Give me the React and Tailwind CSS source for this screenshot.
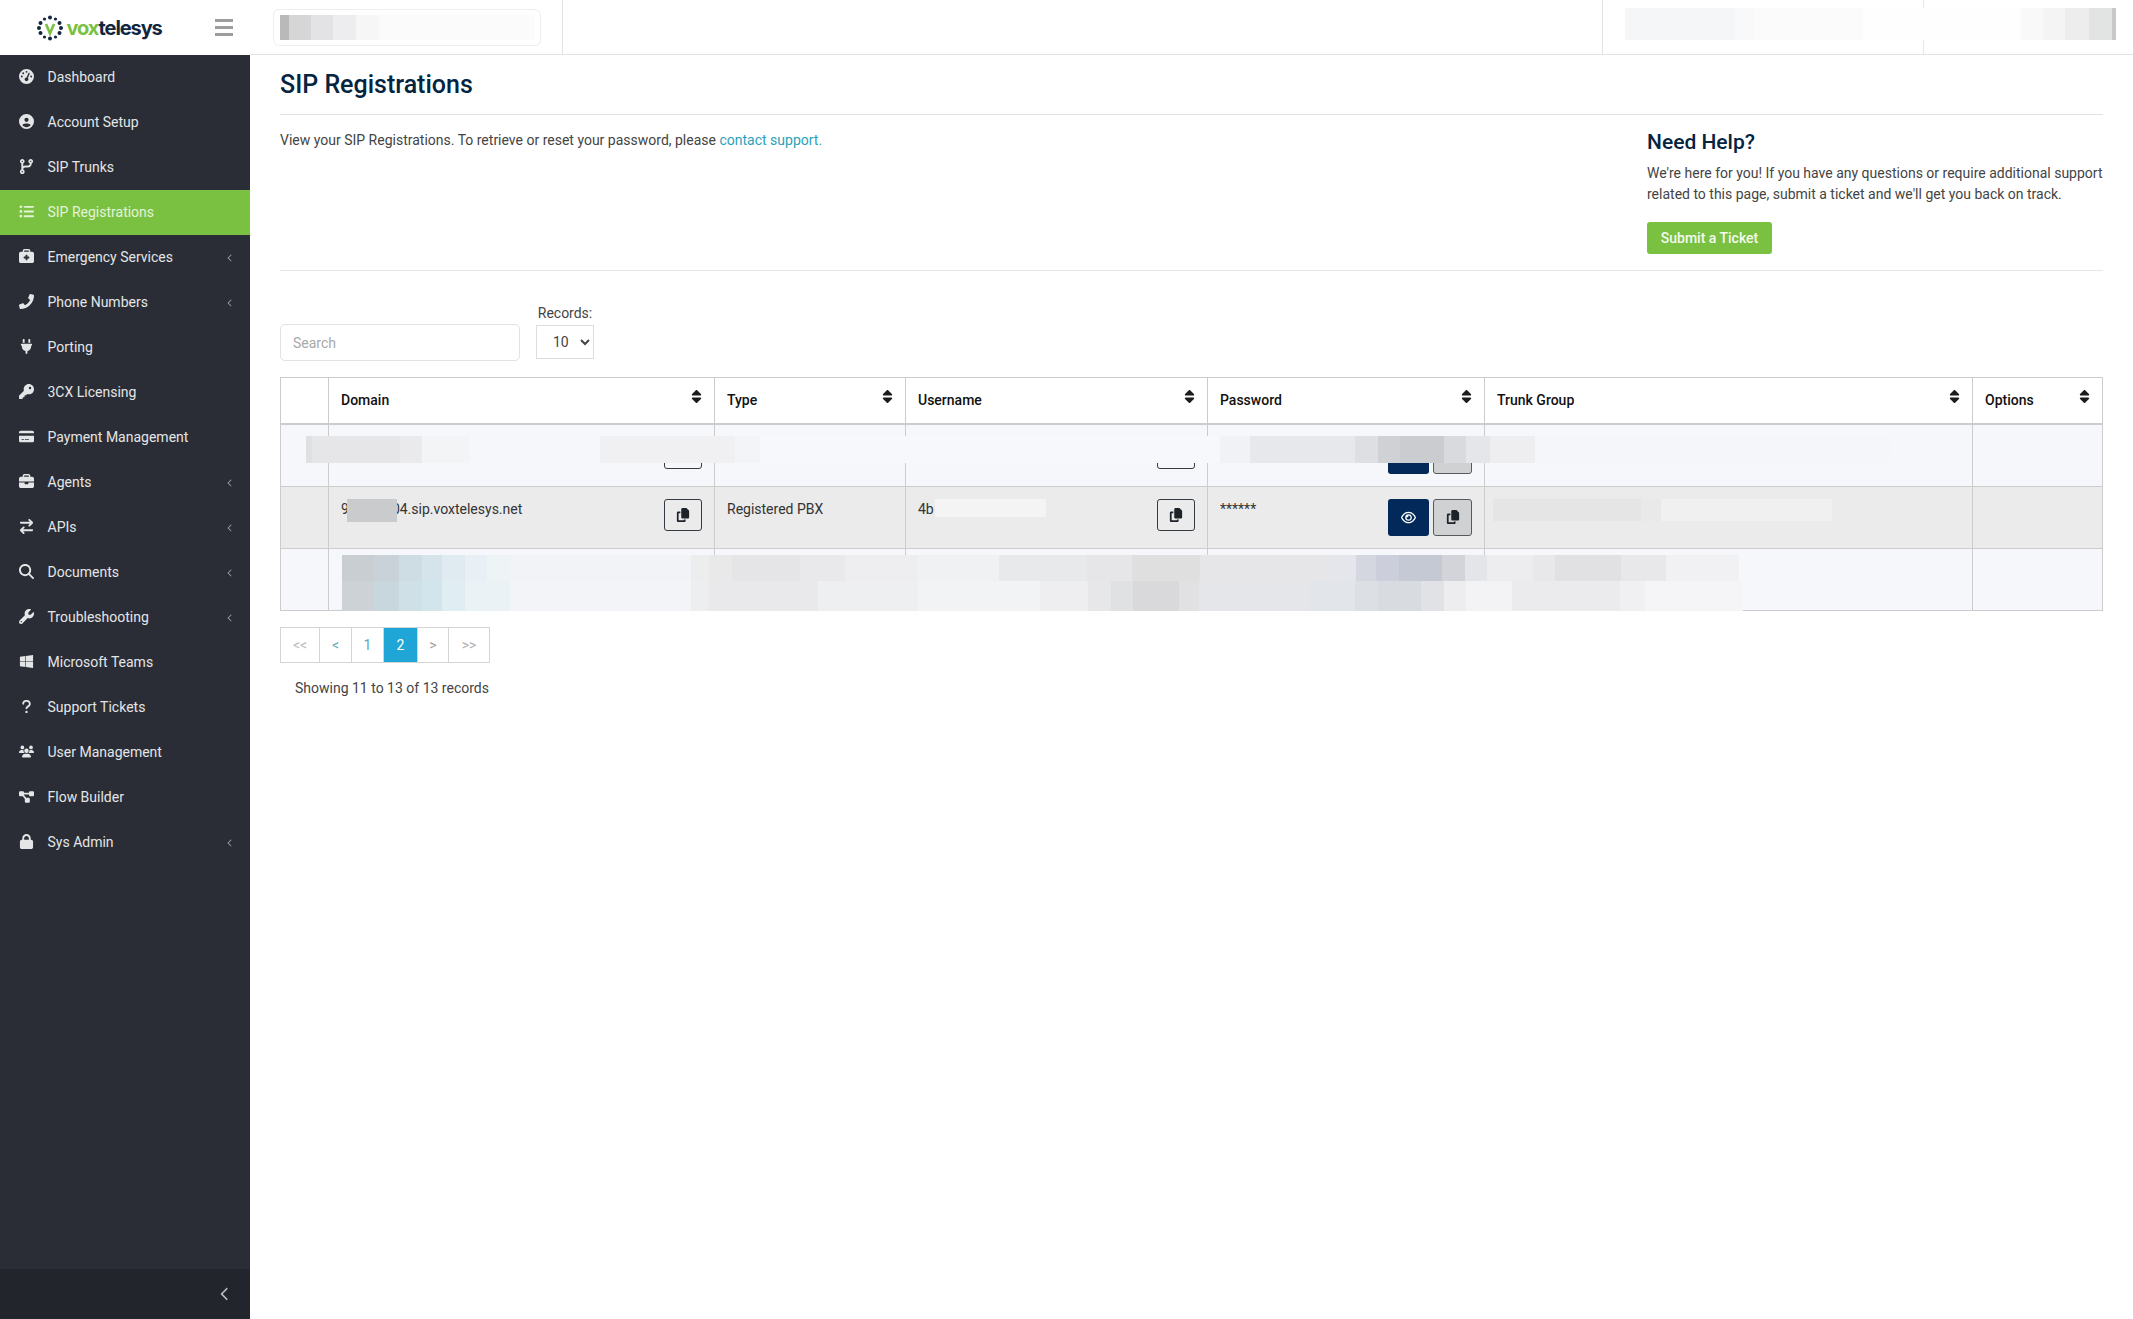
import React from 'react';
import { FaPhone } from 'react-icons/fa';
import {
  FaGaugeHigh, FaCircleUser, FaCodeBranch, FaListUl, FaBriefcaseMedical, FaPlug, FaKey,
  FaCreditCard, FaBriefcase, FaArrowRightArrowLeft, FaMagnifyingGlass, FaWrench, FaWindows, FaQuestion, FaUsers,
  FaDiagramProject, FaLock, FaChevronLeft, FaSort, FaCopy, FaRegEye,
} from 'react-icons/fa6';

const navItems = [
  { label: 'Dashboard', icon: FaGaugeHigh },
  { label: 'Account Setup', icon: FaCircleUser },
  { label: 'SIP Trunks', icon: FaCodeBranch },
  { label: 'SIP Registrations', icon: FaListUl, active: true },
  { label: 'Emergency Services', icon: FaBriefcaseMedical, sub: true },
  { label: 'Phone Numbers', icon: FaPhone, sub: true },
  { label: 'Porting', icon: FaPlug },
  { label: '3CX Licensing', icon: FaKey },
  { label: 'Payment Management', icon: FaCreditCard },
  { label: 'Agents', icon: FaBriefcase, sub: true },
  { label: 'APIs', icon: FaArrowRightArrowLeft, sub: true },
  { label: 'Documents', icon: FaMagnifyingGlass, sub: true },
  { label: 'Troubleshooting', icon: FaWrench, sub: true },
  { label: 'Microsoft Teams', icon: FaWindows },
  { label: 'Support Tickets', icon: FaQuestion },
  { label: 'User Management', icon: FaUsers, size: 17 },
  { label: 'Flow Builder', icon: FaDiagramProject, size: 16 },
  { label: 'Sys Admin', icon: FaLock, sub: true },
];

// [width, colour] runs for the pixelated areas that hide private values
const mosaics = {
  searchBox: [[9, '#b9b9ba'], [22, '#d6d6d7'], [22, '#e3e3e5'], [23, '#ededef'], [23, '#f6f6f7'], [156, '#fbfbfb']],
  headerRight: [[110, '#f5f6f7'], [20, '#f9f9fa'], [108, '#fbfbfc'], [158, '#fefefe'], [22, '#f9f9f9'], [22, '#f4f4f4'], [24, '#ededed'], [23, '#e2e3e3'], [4, '#c8c8c8']],
  rowOne: [[6, '#dfe0e2'], [88, '#e6e6e8'], [22, '#eaeaec'], [48, '#f3f4f6'], [130, '#f6f7fa'], [135, '#f0f0f3'], [25, '#f3f4f7'], [460, '#f7f8fb'], [30, '#f1f2f5'], [105, '#e7e8eb'], [23, '#dddfe2'], [22, '#cfd1d4'], [44, '#cacccf'], [22, '#d8dadd'], [24, '#e5e6e9'], [45, '#eeeef1'], [355, '#f5f6f9']],
  rowThreeTop: [[32, '#c9ced2'], [25, '#c8d2d8'], [23, '#cddde3'], [20, '#d5e3ea'], [23, '#e0ebf1'], [22, '#e9f0f5'], [23, '#eef3f6'], [181, '#f1f3f6'], [18, '#eceded'], [23, '#e9e9ea'], [68, '#e5e5e7'], [45, '#e9e9eb'], [73, '#eeeef0'], [81, '#f0f1f3'], [88, '#e8e9eb'], [45, '#e6e6e8'], [68, '#dfdfe0'], [129, '#e6e6e9'], [27, '#e5e6ec'], [20, '#d4d6e0'], [23, '#cccfdb'], [43, '#c5c9d4'], [23, '#d2d4da'], [22, '#e4e5e8'], [46, '#ededef'], [22, '#e8e8ea'], [66, '#e1e1e3'], [45, '#e8e8ea'], [73, '#f1f1f3']],
  rowThreeBottom: [[32, '#cdd2d6'], [25, '#c8d7de'], [23, '#cfe0e7'], [20, '#d3e5ec'], [23, '#e0edf3'], [45, '#ebf2f6'], [181, '#f3f4f7'], [18, '#edeeef'], [109, '#e9e9eb'], [100, '#eeeff1'], [122, '#f2f3f5'], [48, '#eeeef0'], [23, '#e7e7e9'], [22, '#e0e1e2'], [46, '#d9d9db'], [20, '#e1e1e3'], [109, '#e5e6e9'], [47, '#e2e5e9'], [23, '#dcdfe3'], [43, '#d8dbdf'], [23, '#e0e2e5'], [22, '#ededef'], [46, '#f3f3f5'], [108, '#ebebed'], [25, '#f0f0f2'], [98, '#f5f5f7']],
  trunkGroup: [[148, '#e5e5e6'], [20, '#e9e9ea'], [171, '#f0f0f0']],
};

function Mosaic({ runs, className = 'h-full' }) {
  return (
    <div className={`flex ${className}`}>
      {runs.map(([width, color], i) => (
        <div key={i} style={{ width, backgroundColor: color }} />
      ))}
    </div>
  );
}

function Logo() {
  const dots = [
    [50, 16.5, 2], [44.5, 18, 1.6], [55.5, 18, 1.6], [40.5, 22, 2], [59.5, 22, 2], [39, 27, 2],
    [61, 27, 2], [40.5, 32, 2], [59.5, 32, 2], [44.5, 36, 1.6], [55.5, 36, 1.6], [50, 37.5, 2],
  ];
  return (
    <div className="flex items-center">
      <svg width="28" height="28" viewBox="36 13 28 28" className="shrink-0">
        {dots.map(([cx, cy, r]) => <circle key={`${cx}-${cy}`} cx={cx} cy={cy} r={r} fill="#12263f" />)}
        <path d="M46 23 L50 32.5 L54 23" fill="none" stroke="#7ac142" strokeWidth="2.6" />
      </svg>
      <span className="ml-[2.5px] font-['Inter',sans-serif] text-[20px] leading-none font-bold tracking-[-1.1px]">
        <span className="text-[#7ac142]">vox</span>
        <span className="text-[#12263f]">telesys</span>
      </span>
    </div>
  );
}

function Sidebar() {
  return (
    <aside className="flex w-[250px] shrink-0 flex-col bg-[#2a2d35]">
      <div className="flex h-[55px] items-center justify-between bg-white pr-[17px] pl-[36px]">
        <Logo />
        <div className="flex w-[18px] flex-col gap-[4.5px]">
          <div className="h-[2.5px] bg-[#9d9d9d]" />
          <div className="h-[2.5px] bg-[#9d9d9d]" />
          <div className="h-[2.5px] bg-[#9d9d9d]" />
        </div>
      </div>
      <nav className="flex-1">
        {navItems.map((item) => (
          <div
            key={item.label}
            className={`flex h-[45px] items-center pr-4 pb-[2px] pl-[19px] text-sm ${item.active ? 'bg-[#7ac142] text-[#e4f3d7]' : 'text-[#e4e5e7]'}`}
          >
            <span className="flex w-[28.5px] shrink-0 items-center">
              <span className="flex w-[15px] justify-center">
                <item.icon size={item.size || 15} />
              </span>
            </span>
            <span className="flex-1">{item.label}</span>
            {item.sub && <FaChevronLeft size={8} className="mt-[3px] text-[#9a9ca1]" />}
          </div>
        ))}
      </nav>
      <div className="flex h-[50px] items-center justify-end bg-[#23252c] pr-[18px]">
        <FaChevronLeft size={14} className="text-[#b9bbc0]" />
      </div>
    </aside>
  );
}

function TopBar() {
  return (
    <header className="flex h-[55px] border-b border-[#e2e2e2] bg-white">
      <div className="flex w-[313px] shrink-0 items-center border-r border-[#e2e2e2] pl-[23px]">
        <div className="h-[37px] w-[268px] overflow-hidden rounded-md border border-[#eeeeee] py-[5px] pl-[6px]">
          <Mosaic runs={mosaics.searchBox} />
        </div>
      </div>
      <div className="flex-1" />
      <div className="relative w-[531px] shrink-0 border-l border-[#e2e2e2]">
        <div className="ml-[320px] h-full w-[211px] border-l border-[#e8e8e8]" />
        <div className="absolute top-2 left-[22px] h-8">
          <Mosaic runs={mosaics.headerRight} />
        </div>
      </div>
    </header>
  );
}

function CopyButton({ className = 'h-8 w-[38px] border-[#333a42]' }) {
  return (
    <button className={`flex shrink-0 items-center justify-center rounded-[3px] border text-[#1d2329] ${className}`}>
      <FaCopy size={14} />
    </button>
  );
}

function PasswordButtons() {
  return (
    <div className="flex shrink-0 gap-1">
      <button className="flex h-[37px] w-[41px] items-center justify-center rounded-[3px] bg-[#03295a] text-white">
        <FaRegEye size={15} />
      </button>
      <CopyButton className="h-[37px] w-[39px] border-[#555a60] bg-[#d0d1d3]" />
    </div>
  );
}

const columns = [
  { label: '', width: 'w-[48px]' },
  { label: 'Domain', width: 'w-[386px]' },
  { label: 'Type', width: 'w-[191px]' },
  { label: 'Username', width: 'w-[302px]' },
  { label: 'Password', width: 'w-[277px]' },
  { label: 'Trunk Group', width: 'w-[488px]' },
  { label: 'Options', width: 'w-[130px]' },
];

function RegistrationsTable() {
  const cell = 'border border-[#cccccc] px-3 py-3 align-top';
  return (
    <div className="relative mt-4">
      <table className="w-[1822px] table-fixed border-collapse text-sm text-[#333]">
        <colgroup>
          {columns.map((c) => <col key={c.label} className={c.width} />)}
        </colgroup>
        <thead>
          <tr className="h-[46px]">
            {columns.map((c) => (
              <th key={c.label} className="border border-b-2 border-[#cccccc] px-3 align-middle font-medium text-[#111]">
                {c.label && (
                  <div className="flex items-center justify-between text-left">
                    <span className="-mt-[1px] pr-[1px]">{c.label}</span>
                    <FaSort size={15} className="-mt-[7px] -mr-[2px] text-[#1c1c1c]" />
                  </div>
                )}
              </th>
            ))}
          </tr>
        </thead>
        <tbody>
          <tr className="h-[62px] bg-[#f5f7fa]">
            <td className={cell} />
            <td className={cell}><div className="flex justify-end"><CopyButton /></div></td>
            <td className={cell} />
            <td className={cell}><div className="flex justify-end"><CopyButton /></div></td>
            <td className={cell}><div className="flex justify-end"><PasswordButtons /></div></td>
            <td className={cell} />
            <td className={cell} />
          </tr>
          <tr className="h-[62px] bg-[#ebebeb]">
            <td className={cell} />
            <td className={cell}>
              <div className="flex items-start justify-between">
                <span className="relative whitespace-nowrap">
                  9
                  <span className="relative z-10 -ml-[2px] inline-block h-[23px] w-[50px] bg-[#c9cbcd] align-top" />
                  <span className="-ml-[5px]">04.sip.voxtelesys.net</span>
                </span>
                <CopyButton />
              </div>
            </td>
            <td className={cell}>Registered PBX</td>
            <td className={cell}>
              <div className="flex items-start justify-between">
                <span className="flex items-start">
                  4b
                  <span className="ml-[1px] inline-block h-[18px] w-[111px] bg-[#f4f4f4]" />
                </span>
                <CopyButton />
              </div>
            </td>
            <td className={cell}>
              <div className="flex items-start justify-between">
                <span>******</span>
                <PasswordButtons />
              </div>
            </td>
            <td className="border border-[#cccccc] py-3 pr-3 pl-2 align-top">
              <Mosaic runs={mosaics.trunkGroup} className="h-[22px]" />
            </td>
            <td className={cell} />
          </tr>
          <tr className="h-[62px] bg-[#f5f7fa]">
            <td className={cell} />
            <td className={cell} />
            <td className={cell} />
            <td className={cell} />
            <td className={cell} />
            <td className={cell} />
            <td className={cell} />
          </tr>
        </tbody>
      </table>
      {/* masked values lying over the first and last rows */}
      <div className="absolute top-[59px] left-[26px] h-[27px]">
        <Mosaic runs={mosaics.rowOne} />
      </div>
      <div className="absolute top-[178px] left-[62px]">
        <Mosaic runs={mosaics.rowThreeTop} className="h-[26px]" />
        <Mosaic runs={mosaics.rowThreeBottom} className="h-[30px]" />
      </div>
    </div>
  );
}

function Pagination() {
  const pages = [
    { label: '<<', cls: 'w-10 text-[#b8b8b8]' },
    { label: '<', cls: 'w-[33px] text-[#5fa8b8]' },
    { label: '1', cls: 'w-[33px] text-[#5fa8b8]' },
    { label: '2', cls: 'w-[35px] bg-[#1fa5d6] text-white border-[#1fa5d6]' },
    { label: '>', cls: 'w-[32px] text-[#a0a0a0]' },
    { label: '>>', cls: 'w-[42px] text-[#b0b0b0]' },
  ];
  return (
    <div className="mt-4 flex h-9">
      {pages.map((p) => (
        <button key={p.label} className={`-ml-px flex items-center justify-center border border-[#d5d5d5] text-sm first:ml-0 ${p.cls}`}>
          {p.label}
        </button>
      ))}
    </div>
  );
}

export default function App() {
  return (
    <div className="flex min-h-screen w-full bg-white font-['Roboto',sans-serif] text-sm text-[#333]">
      <Sidebar />
      <div className="min-w-0 flex-1">
        <TopBar />
        <main className="px-[30px]">
          <h1 className="flex h-[60px] items-center border-b border-[#e2e2e2] text-[25px] font-medium text-[#04243f]">
            SIP Registrations
          </h1>
          <section className="flex h-[156px] justify-between border-b border-[#e8e8e8]">
            <p className="pt-[15px] leading-[21px] text-[#444]">
              View your SIP Registrations. To retrieve or reset your password, please{' '}
              <a className="text-[#2ba2bb]">contact support.</a>
            </p>
            <div className="w-[456px] pt-[14px]">
              <h2 className="text-[21px] leading-[26px] font-medium text-[#04243f]">Need Help?</h2>
              <p className="mt-[8px] leading-[21px] text-[#444]">
                We're here for you! If you have any questions or require additional support related to this page, submit a ticket and we'll get you back on track.
              </p>
              <button className="mt-[17px] h-8 w-[125px] rounded-[3px] bg-[#7ac142] font-medium text-[#f4faee]">
                Submit a Ticket
              </button>
            </div>
          </section>
          <div className="mt-[32px] flex items-end gap-4">
            <input
              placeholder="Search"
              className="h-[37px] w-[240px] rounded-[5px] border border-[#e2e2e2] px-3 text-sm placeholder:text-[#a8a8a8]"
            />
            <label className="flex flex-col items-center gap-[1px] text-[#444]">
              <span className="leading-[21px]">Records:</span>
              <select defaultValue="10" className="mb-[2px] h-[34px] w-[58px] border border-[#dddddd] bg-white pl-3 text-sm text-[#444]">
                <option>10</option>
                <option>25</option>
                <option>50</option>
              </select>
            </label>
          </div>
          <RegistrationsTable />
          <Pagination />
          <p className="mt-[15px] pl-[15px] leading-[21px] text-[#444]">Showing 11 to 13 of 13 records</p>
        </main>
      </div>
    </div>
  );
}
